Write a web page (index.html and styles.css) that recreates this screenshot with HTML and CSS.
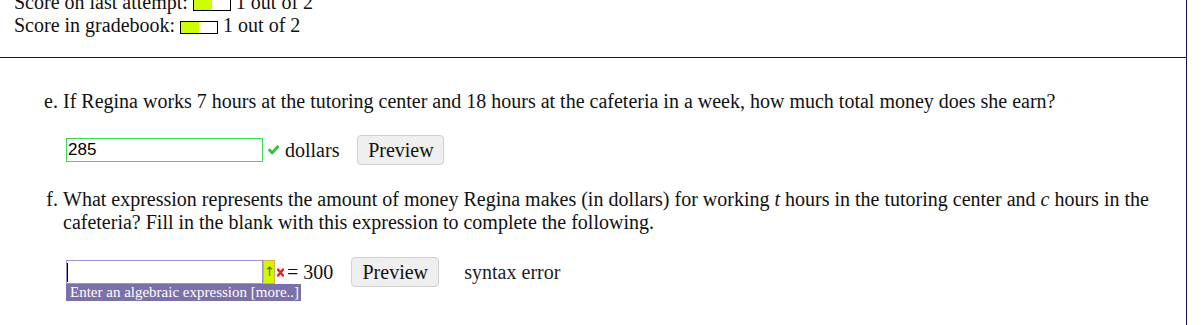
FILE: index.html
```html
<!DOCTYPE html>
<html>
<head>
<meta charset="utf-8">
<link rel="stylesheet" href="styles.css">
</head>
<body>
<div class="page">
  <div class="scores">
    <div class="score-line">Score on last attempt: <span class="meter"><span class="meter-fill" style="width:50%"></span></span> 1 out of 2</div>
    <div class="score-line">Score in gradebook: <span class="meter"><span class="meter-fill" style="width:50%"></span></span> 1 out of 2</div>
  </div>
  <ol class="parts" type="a" start="5">
    <li class="part">
      <div class="prompt">If Regina works 7 hours at the tutoring center and 18 hours at the cafeteria in a week, how much total money does she earn?</div>
      <div class="answer-row">
        <div class="field correct">285</div>
        <svg class="check" width="11" height="10" viewBox="0 0 11 10"><path d="M1.6 5.2 L4.3 7.8 L9.6 1.8" fill="none" stroke="#38c04a" stroke-width="3" stroke-linecap="round" stroke-linejoin="round"/></svg>
        <span class="unit">dollars</span>
        <button class="btn">Preview</button>
      </div>
    </li>
    <li class="part">
      <div class="prompt">What expression represents the amount of money Regina makes (in dollars) for working <i class="var">t</i> hours in the tutoring center and <i class="var">c</i> hours in the cafeteria? Fill in the blank with this expression to complete the following.</div>
      <div class="answer-row">
        <div class="field-wrap">
          <div class="field wrong"><span class="caret"></span></div>
          <div class="tip">Enter an algebraic expression [more..]</div>
        </div>
        <span class="arrow-box">↑</span>
        <svg class="xmark" width="7" height="9" viewBox="0 0 7 9"><path d="M1 1.5 L6 7.5 M6 1.5 L1 7.5" stroke="#e8202a" stroke-width="2.4" stroke-linecap="round"/></svg>
        <span class="eq">= 300</span>
        <button class="btn btn2">Preview</button>
        <span class="status">syntax error</span>
      </div>
    </li>
  </ol>
</div>
</body>
</html>
```

FILE: styles.css
```css
html, body {
  margin: 0;
  padding: 0;
  background: #fff;
}
body {
  font-family: "Liberation Serif", "Times New Roman", serif;
  font-size: 20px;
  color: #111;
  overflow: hidden;
}
.page {
  width: 1186px;
  border-right: 1px solid #1c0f4f;
  margin-top: -9px;
  min-height: 340px;
}
.scores {
  padding: 0 0 20px 14px;
  border-bottom: 1px solid #1c0f4f;
}
.score-line {
  line-height: 23px;
  height: 23px;
}
.meter {
  display: inline-block;
  width: 36px;
  height: 11px;
  border: 1px solid #000;
  vertical-align: -2px;
  position: relative;
  overflow: hidden;
}
.meter-fill {
  display: block;
  height: 100%;
  background: #ccff00;
}
.parts {
  margin: 32px 0 0 0;
  padding: 0 20px 0 63px;
  list-style-type: lower-alpha;
}
.part {
  line-height: 23px;
}
.prompt {
  line-height: 23px;
}
.var {
  font-style: italic;
}
.answer-row {
  display: flex;
  align-items: center;
  height: 30px;
  margin: 22px 0 23px 3px;
}
.part:last-child .answer-row {
  margin-top: 23px;
}
.field-wrap {
  position: relative;
}
.field {
  box-sizing: border-box;
  width: 197px;
  height: 24px;
  border: 1px solid #3ddc55;
  font-family: "Liberation Sans", Arial, sans-serif;
  font-size: 17px;
  line-height: 22px;
  padding-left: 1px;
  color: #000;
}
.field.wrong {
  border-color: #a391d6;
  position: relative;
}
.caret {
  position: absolute;
  left: 0;
  top: 2px;
  width: 1px;
  height: 19px;
  background: #000;
}
.tip {
  position: absolute;
  left: 0;
  top: 24px;
  white-space: nowrap;
  background: #7b70a8;
  color: #fff;
  font-size: 15px;
  line-height: 17px;
  height: 17px;
  padding: 0 2px 0 4px;
}
.check {
  margin-left: 5px;
  margin-right: 6px;
}
.unit {
  line-height: 23px;
}
.btn {
  box-sizing: border-box;
  height: 30px;
  width: 87px;
  margin-left: 18px;
  padding: 0;
  font-family: "Liberation Serif", "Times New Roman", serif;
  font-size: 20px;
  color: #111;
  background: #efefef;
  border: 1px solid #d0d0d0;
  border-radius: 4px;
}
.btn2 {
  margin-left: 18px;
  width: 88px;
}
.arrow-box {
  box-sizing: border-box;
  width: 12px;
  height: 24px;
  background: #d2f800;
  border: 1px solid #e2a85a;
  color: #5a6a30;
  font-family: "DejaVu Sans", sans-serif;
  font-size: 13px;
  line-height: 22px;
  text-align: center;
  overflow: hidden;
}
.xmark {
  margin-left: 2px;
  margin-right: 3px;
}
.eq {
  line-height: 23px;
}
.status {
  margin-left: 25px;
  color: #222;
  line-height: 23px;
}
```
